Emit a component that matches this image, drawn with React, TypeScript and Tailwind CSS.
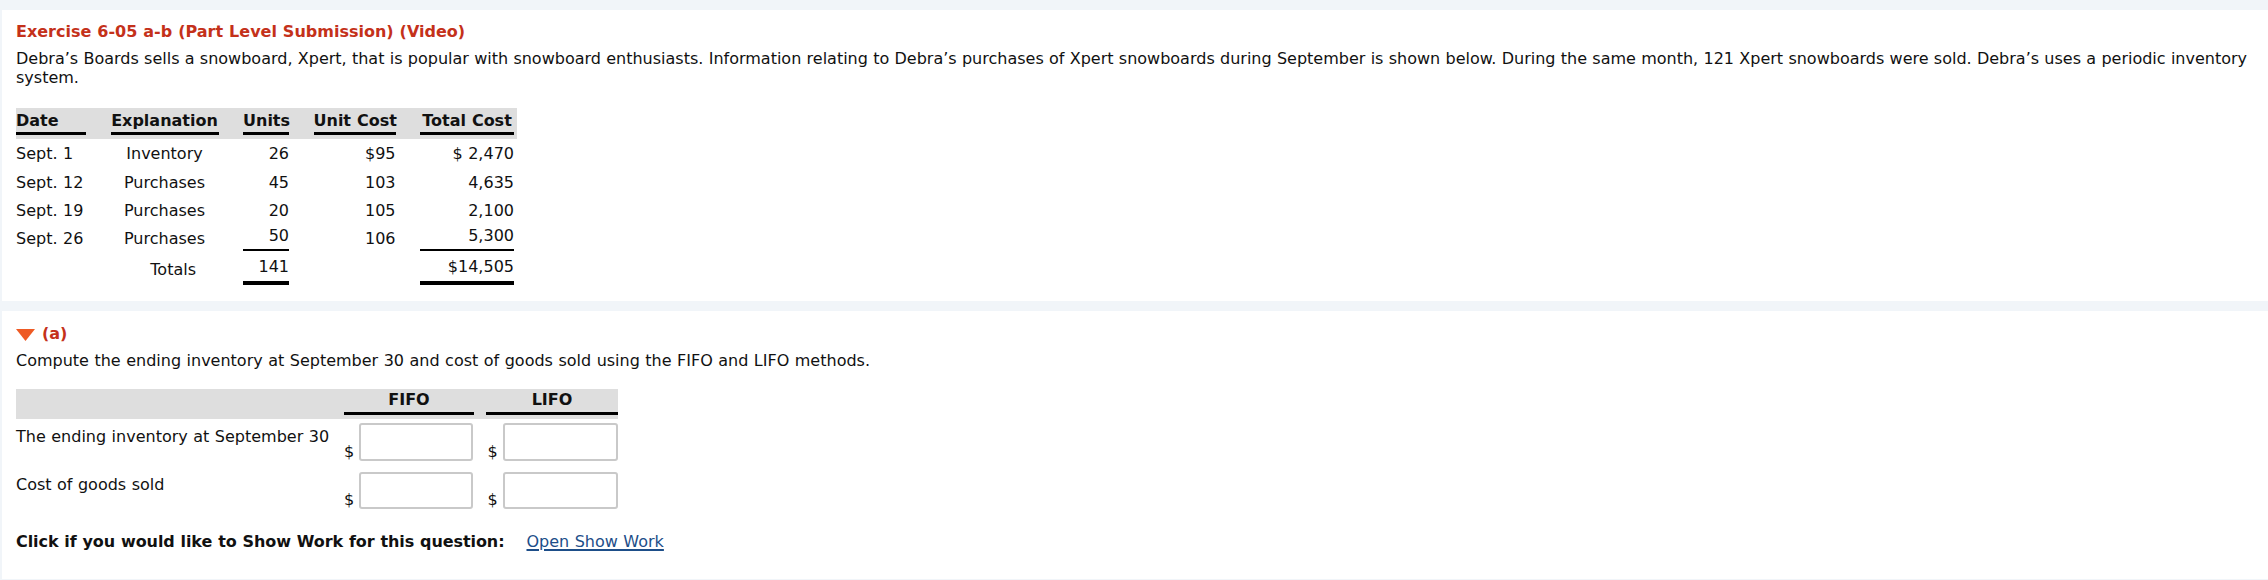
import React from "react";

const cols = "grid grid-cols-[70px_108px_46px_82px_94px] gap-x-[24.5px] whitespace-nowrap";

const rows = [
  ["Sept. 1", "Inventory", "26", "$95", "$ 2,470"],
  ["Sept. 12", "Purchases", "45", "103", "4,635"],
  ["Sept. 19", "Purchases", "20", "105", "2,100"],
];

function AnswerCell({ lifo }: { lifo?: boolean }) {
  return (
    <div className={"flex items-end pt-[4.3px] " + (lifo ? "pl-[1.5px]" : "")}>
      <span className="leading-[19px]">$</span>
      <input
        type="text"
        aria-label="answer"
        className={
          "ml-[5px] h-[37.4px] rounded-[3px] border-2 border-[#c9c9c9] bg-white outline-none " +
          (lifo ? "w-[115px]" : "w-[114px]")
        }
      />
    </div>
  );
}

export default function App() {
  return (
    <div className="min-h-[580px] bg-[#f1f5f9] pl-[2px] pt-[10px] font-['DejaVu_Sans',Verdana,sans-serif] text-[16px] leading-[19px] text-[#111] [word-spacing:0.4px]">
      <section className="bg-white pb-[16px] pl-[14px] pr-[8px] pt-[12px]">
        <h1 className="text-[16px] font-bold leading-[20px] text-[#c4311a]">
          Exercise 6-05 a-b (Part Level Submission) (Video)
        </h1>
        <p className="mt-[7px] [word-spacing:0.2px]">
          Debra’s Boards sells a snowboard, Xpert, that is popular with snowboard enthusiasts. Information relating to
          Debra’s purchases of Xpert snowboards during September is shown below. During the same month, 121 Xpert
          snowboards were sold. Debra’s uses a periodic inventory system.
        </p>

        <div className="mt-[21px] w-fit">
          <div className={cols + " bg-[#dedede] pb-[4px] pr-[3px] pt-[3px] font-bold"}>
            <div className="border-b-[3px] border-black pb-[2px] text-left">Date</div>
            <div className="border-b-[3px] border-black pb-[2px] text-center">Explanation</div>
            <div className="border-b-[3px] border-black pb-[2px] text-center">Units</div>
            <div className="border-b-[3px] border-black pb-[2px] text-center">Unit Cost</div>
            <div className="border-b-[3px] border-black pb-[2px] text-center">Total Cost</div>
          </div>
          {rows.map((r) => (
            <div key={r[0]} className={cols + " pb-[4.3px] pt-[5.3px]"}>
              <div>{r[0]}</div>
              <div className="text-center">{r[1]}</div>
              <div className="text-right">{r[2]}</div>
              <div className="text-right">{r[3]}</div>
              <div className="text-right">{r[4]}</div>
            </div>
          ))}
          <div className={cols + " items-start"}>
            <div className="pt-[4.2px]">Sept. 26</div>
            <div className="pt-[4.2px] text-center">Purchases</div>
            <div className="border-b-2 border-black pb-[4.4px] pt-[1px] text-right">50</div>
            <div className="pt-[4.2px] text-right">106</div>
            <div className="border-b-2 border-black pb-[4.4px] pt-[1px] text-right">5,300</div>
          </div>
          <div className={cols + " items-start"}>
            <div />
            <div className="pr-[22.5px] pt-[9px] text-right">Totals</div>
            <div className="border-b-4 border-black pb-[4.4px] pt-[6.3px] text-right">141</div>
            <div />
            <div className="border-b-4 border-black pb-[4.4px] pt-[6.3px] text-right">$14,505</div>
          </div>
        </div>
      </section>

      <div className="h-[10px]" />

      <section className="bg-white pb-[28px] pl-[14px] pr-[14px] pt-[13px]">
        <div className="flex items-start">
          <svg width="19" height="12" viewBox="0 0 19 12" className="mt-[5px] shrink-0">
            <polygon points="0,0 19,0 9.5,12" fill="#ee5a24" />
          </svg>
          <span className="ml-[7px] font-bold text-[#c4311a]">(a)</span>
        </div>
        <p className="mt-[7.7px]">Compute the ending inventory at September 30 and cost of goods sold using the FIFO and LIFO methods.</p>

        <div className="mt-[19.3px] w-[602px] whitespace-nowrap">
          <div className="grid grid-cols-[316px_130px_132px] gap-x-[12px] bg-[#dedede] pb-[4px] pt-[1px] font-bold">
            <div />
            <div className="border-b-[3px] border-black pb-[3px] text-center">FIFO</div>
            <div className="border-b-[3px] border-black pb-[3px] text-center">LIFO</div>
          </div>
          <div className="grid grid-cols-[316px_130px_132px] items-start gap-x-[12px] pb-[6.8px]">
            <div className="pt-[8px]">The ending inventory at September 30</div>
            <AnswerCell />
            <AnswerCell lifo />
          </div>
          <div className="grid grid-cols-[316px_130px_132px] items-start gap-x-[12px] pb-[6.8px]">
            <div className="pt-[8px]">Cost of goods sold</div>
            <AnswerCell />
            <AnswerCell lifo />
          </div>
        </div>

        <div className="mt-[16.3px] flex whitespace-nowrap">
          <span className="font-bold tracking-[-0.08px]">Click if you would like to Show Work for this question:</span>
          <a href="#" className="ml-[22px] text-[#1d4e89] underline decoration-2 underline-offset-[2px]">
            Open Show Work
          </a>
        </div>
      </section>
    </div>
  );
}
